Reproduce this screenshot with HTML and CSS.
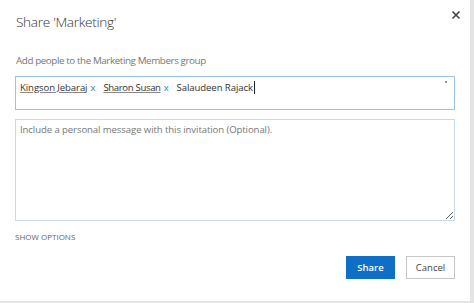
FILE: index.html
```html
<html>
  <head>
    <meta name="viewport" content="width=device-width, initial-scale=1.0">
    <title>Share 'Marketing'</title>
    <link rel="stylesheet" href="styles.css">
  </head>
  <body>
    <div class="dialog">
      <div class="dialog-head">
        <h1 class="dialog-title">Share 'Marketing'</h1>
        <svg class="close" viewBox="0 0 10 10" width="10" height="10">
          <path d="M1.5 1.5l7 7M8.5 1.5l-7 7" stroke="#444" stroke-width="1.6" fill="none"/>
        </svg>
      </div>

      <div class="field-label">Add people to the Marketing Members group</div>
      <div class="people-box">
        <span class="person">Kingson Jebaraj</span><span class="remove">x</span>
        <span class="person">Sharon Susan</span><span class="remove">x</span>
        <span class="typing">Salaudeen Rajack</span><span class="caret"></span>
        <span class="required-mark"></span>
      </div>

      <textarea class="message" placeholder="Include a personal message with this invitation (Optional)."></textarea>

      <div class="show-options">SHOW OPTIONS</div>

      <div class="actions">
        <button class="btn btn-primary">Share</button>
        <button class="btn">Cancel</button>
      </div>
    </div>
  </body>
</html>
```

FILE: styles.css
```css
html, body {
  margin: 0;
  height: 100%;
}
body {
  background: #e4e4e4;
  font-family: "Open Sans", "Noto Sans", sans-serif;
  color: #444;
}
.dialog {
  width: 470px;
  height: 301px;
  box-sizing: border-box;
  background: white;
  padding: 0 15px 0 15px;
  display: flex;
  flex-direction: column;
}
.dialog-head {
  display: flex;
  align-items: flex-start;
  justify-content: space-between;
  padding-top: 12px;
}
.dialog-title {
  margin: 0;
  font-size: 13.6px;
  font-weight: 300;
  letter-spacing: -0.3px;
  color: #333;
  line-height: 20px;
  padding-left: 1px;
}
.close {
  margin-top: -2px;
  margin-right: -6px;
}
.field-label {
  margin-top: 21px;
  font-size: 9.8px;
  letter-spacing: -0.4px;
  color: #777;
  line-height: 16px;
  padding-left: 1px;
}
.people-box {
  margin-top: 7px;
  height: 34px;
  box-sizing: border-box;
  border: 1px solid #9cc3e5;
  padding: 4px 4px 0 4px;
  font-size: 9.6px;
  letter-spacing: -0.1px;
  color: #333;
  line-height: 14px;
  position: relative;
  display: flex;
  align-items: flex-start;
}
.person {
  text-decoration: underline;
  text-decoration-color: #888;
}
.person + .remove + .person {
  letter-spacing: -0.35px;
}
.remove {
  color: #2a7cc7;
  margin: 0 8px 0 3px;
}
.caret {
  width: 1px;
  height: 13px;
  background: #222;
  margin-left: 1px;
}
.required-mark {
  position: absolute;
  top: 4px;
  right: 7px;
  width: 2px;
  height: 2px;
  background: #999;
}
.message {
  margin-top: 9px;
  height: 102px;
  width: 100%;
  box-sizing: border-box;
  border: 1px solid #c9dbe9;
  padding: 3px 4px;
  font-family: "Open Sans", "Noto Sans", sans-serif;
  font-size: 9.6px;
  letter-spacing: -0.1px;
  line-height: 14px;
  resize: vertical;
  outline: none;
}
.message::placeholder {
  color: #777;
}
.show-options {
  margin-top: 10px;
  font-size: 8px;
  color: #666;
  line-height: 12px;
}
.actions {
  margin-top: 13px;
  display: flex;
  justify-content: flex-end;
  gap: 11px;
  padding-right: 0;
}
.btn {
  width: 49px;
  height: 23px;
  box-sizing: border-box;
  border: 1px solid #c6c6c6;
  background: white;
  color: #444;
  font-family: "Open Sans", "Noto Sans", sans-serif;
  font-size: 9.5px;
  padding: 0;
}
.btn-primary {
  background: #0f6fc6;
  border-color: #0f6fc6;
  color: white;
  font-weight: 600;
}
```
